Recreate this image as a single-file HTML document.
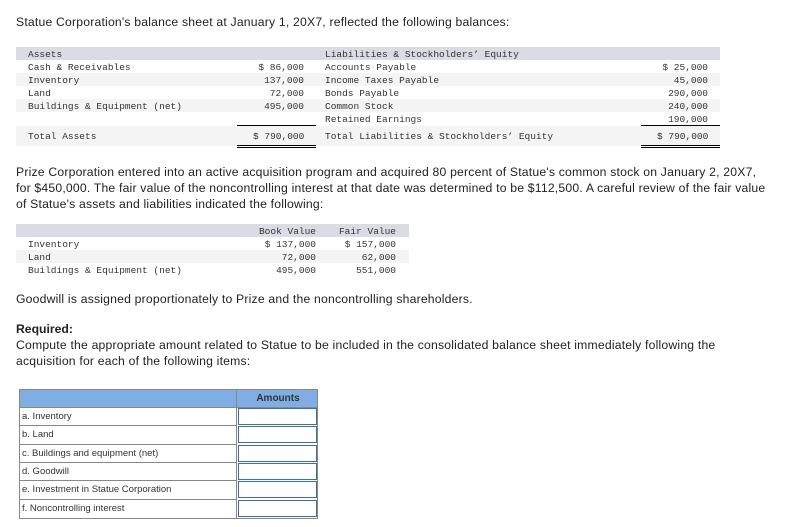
<!DOCTYPE html><html><head><style>
body{margin:0;width:785px;height:527px;background:#fff;font-family:"Liberation Sans",Arial,sans-serif;font-size:12.2px;color:#222;position:relative;overflow:hidden}
.a{position:absolute;white-space:nowrap}
.m{font-family:"Liberation Mono",monospace;font-size:9.5px;color:#333;letter-spacing:0}
.r{text-align:right}
.p{position:absolute;left:16px;line-height:16px;letter-spacing:0.2px}
.c{position:absolute;box-sizing:border-box;border:1px solid #888;font-size:9.5px;color:#333;padding-left:2px;line-height:17px}
.i{position:absolute;box-sizing:border-box;border:1px solid #3a6fb0;width:79px;height:17px;left:238px}
</style></head><body>
<div class="a" style="left:16px;top:15px;letter-spacing:0.2px">Statue Corporation's balance sheet at January 1, 20X7, reflected the following balances:</div>

<div class="a" style="left:16px;top:47px;width:704px;height:13px;background:#d9dce4"></div>
<div class="a" style="left:16px;top:73px;width:704px;height:13px;background:#f4f4f4"></div>
<div class="a" style="left:16px;top:99px;width:704px;height:13px;background:#f4f4f4"></div>
<div class="a" style="left:16px;top:126px;width:704px;height:20px;background:#f4f4f4"></div>
<div class="a" style="left:237px;top:125px;width:79px;border-top:1px solid #000"></div>
<div class="a" style="left:237px;top:145px;width:79px;border-top:1px solid #000;border-bottom:1px solid #000;height:1px"></div>
<div class="a" style="left:641px;top:125px;width:79px;border-top:1px solid #000"></div>
<div class="a" style="left:641px;top:145px;width:79px;border-top:1px solid #000;border-bottom:1px solid #000;height:1px"></div>

<div class="a m" style="left:28px;top:48px;line-height:13px">Assets<br>Cash &amp; Receivables<br>Inventory<br>Land<br>Buildings &amp; Equipment (net)</div>
<div class="a m r" style="right:481px;top:61px;line-height:13px">$ 86,000<br>137,000<br>72,000<br>495,000</div>
<div class="a m" style="left:28px;top:131px">Total Assets</div>
<div class="a m" style="left:253px;top:131px">$ 790,000</div>
<div class="a m" style="left:325px;top:48px;line-height:13px">Liabilities &amp; Stockholders’ Equity<br>Accounts Payable<br>Income Taxes Payable<br>Bonds Payable<br>Common Stock<br><span style="line-height:14px">Retained Earnings</span></div>
<div class="a m r" style="right:77px;top:61px;line-height:13px">$ 25,000<br>45,000<br>290,000<br>240,000<br>190,000</div>
<div class="a m" style="left:325px;top:131px">Total Liabilities &amp; Stockholders’ Equity</div>
<div class="a m" style="left:657px;top:131px">$ 790,000</div>

<div class="p" style="top:164px;width:765px">Prize Corporation entered into an active acquisition program and acquired 80 percent of Statue's common stock on January 2, 20X7,<br>for $450,000. The fair value of the noncontrolling interest at that date was determined to be $112,500. A careful review of the fair value<br>of Statue's assets and liabilities indicated the following:</div>

<div class="a" style="left:16px;top:224px;width:393px;height:13px;background:#d9dce4"></div>
<div class="a" style="left:16px;top:250px;width:393px;height:13px;background:#f4f4f4"></div>
<div class="a m" style="left:28px;top:238px;line-height:13px">Inventory<br>Land<br>Buildings &amp; Equipment (net)</div>
<div class="a m r" style="right:469px;top:225px;line-height:13px">Book Value<br>$ 137,000<br>72,000<br>495,000</div>
<div class="a m r" style="right:389px;top:225px;line-height:13px">Fair Value<br>$ 157,000<br>62,000<br>551,000</div>

<div class="a" style="left:16px;top:292px;letter-spacing:0.2px">Goodwill is assigned proportionately to Prize and the noncontrolling shareholders.</div>
<div class="a" style="left:16px;top:322px;font-weight:bold">Required:</div>
<div class="p" style="top:337px;width:765px">Compute the appropriate amount related to Statue to be included in the consolidated balance sheet immediately following the<br>acquisition for each of the following items:</div>

<div class="c" style="left:19px;top:389px;width:218px;height:19px;background:#7eaee3"></div>
<div class="c" style="left:236px;top:389px;width:82px;height:19px;background:#7eaee3;text-align:center;font-weight:bold;font-size:10px">Amounts</div>
<div class="c" style="left:19px;top:407px;width:218px;height:19px">a. Inventory</div>
<div class="c" style="left:19px;top:425px;width:218px;height:20px">b. Land</div>
<div class="c" style="left:19px;top:444px;width:218px;height:19px">c. Buildings and equipment (net)</div>
<div class="c" style="left:19px;top:462px;width:218px;height:19px">d. Goodwill</div>
<div class="c" style="left:19px;top:480px;width:218px;height:20px">e. Investment in Statue Corporation</div>
<div class="c" style="left:19px;top:499px;width:218px;height:20px">f. Noncontrolling interest</div>
<div class="c" style="left:236px;top:407px;width:82px;height:112px;padding:0"></div>
<div class="i" style="top:408px"></div>
<div class="i" style="top:426px"></div>
<div class="i" style="top:445px"></div>
<div class="i" style="top:463px"></div>
<div class="i" style="top:481px"></div>
<div class="i" style="top:500px"></div>
</body></html>
